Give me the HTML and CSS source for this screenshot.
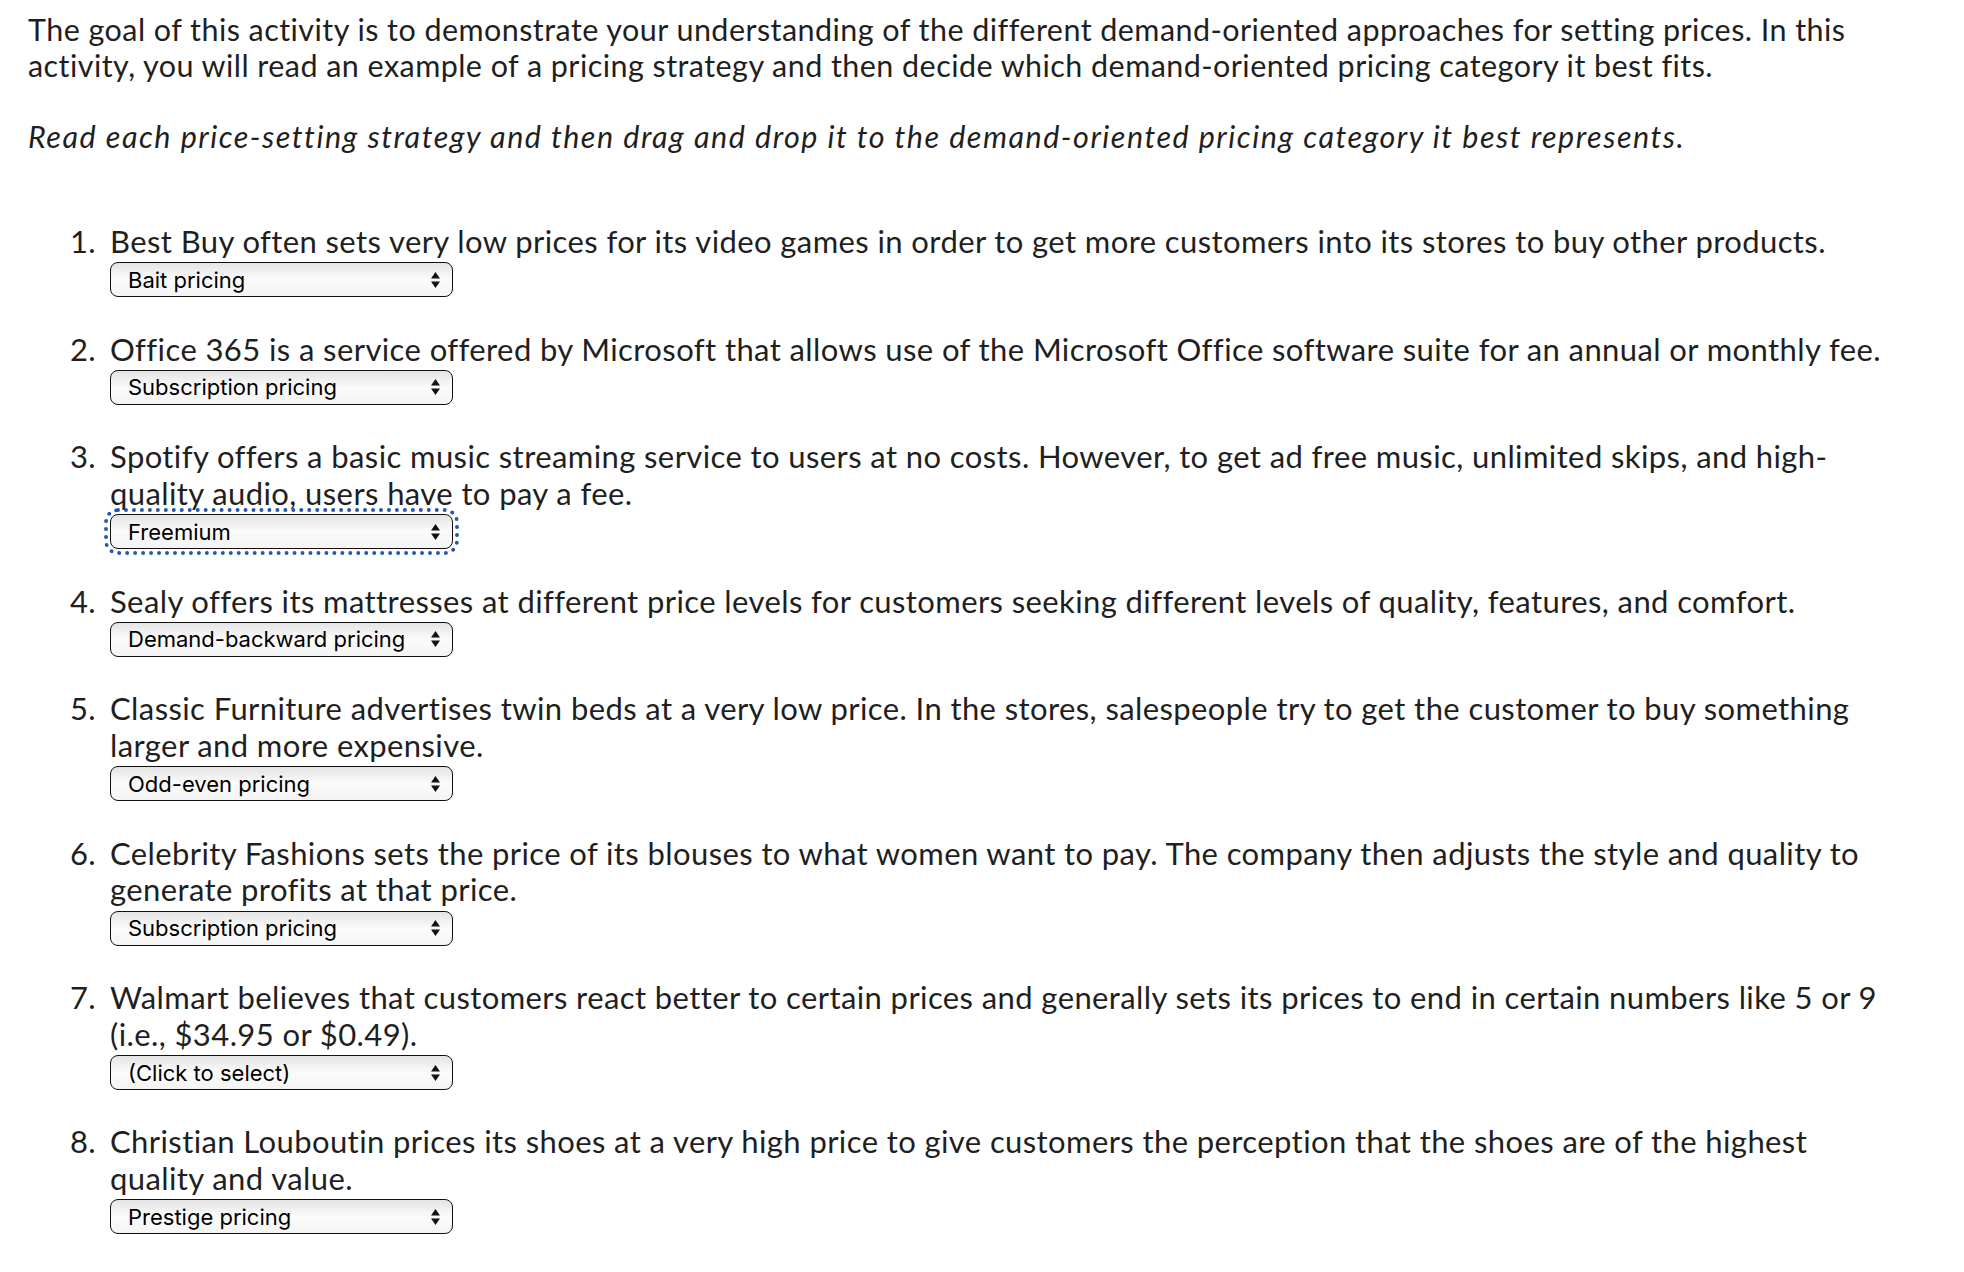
FILE: index.html
```html
<!DOCTYPE html>
<html lang="en">
<head>
  <meta charset="UTF-8">
  <meta name="viewport" content="width=device-width, initial-scale=1.0">
  <title>Demand-oriented pricing</title>
  <link rel="stylesheet" href="styles.css">
</head>
<body>
  <div class="activity">
    <p class="intro">The goal of this activity is to demonstrate your understanding of the different demand-oriented approaches for setting prices. In this activity, you will read an example of a pricing strategy and then decide which demand-oriented pricing category it best fits.</p>
    <p class="instructions">Read each price-setting strategy and then drag and drop it to the demand-oriented pricing category it best represents.</p>

    <ol class="questions">
      <li>
        <p class="q-text">Best Buy often sets very low prices for its video games in order to get more customers into its stores to buy other products.</p>
        <span class="dropdown">
          <select>
            <option>(Click to select)</option>
            <option selected>Bait pricing</option>
            <option>Subscription pricing</option>
            <option>Freemium</option>
            <option>Demand-backward pricing</option>
            <option>Odd-even pricing</option>
            <option>Prestige pricing</option>
          </select>
          <svg class="arrows" viewBox="0 0 11 18"><polygon points="5.5,1 10,7.5 1,7.5"/><polygon points="1,10.5 10,10.5 5.5,17"/></svg>
        </span>
      </li>
      <li>
        <p class="q-text">Office 365 is a service offered by Microsoft that allows use of the Microsoft Office software suite for an annual or monthly fee.</p>
        <span class="dropdown">
          <select>
            <option>(Click to select)</option>
            <option>Bait pricing</option>
            <option selected>Subscription pricing</option>
            <option>Freemium</option>
            <option>Demand-backward pricing</option>
            <option>Odd-even pricing</option>
            <option>Prestige pricing</option>
          </select>
          <svg class="arrows" viewBox="0 0 11 18"><polygon points="5.5,1 10,7.5 1,7.5"/><polygon points="1,10.5 10,10.5 5.5,17"/></svg>
        </span>
      </li>
      <li>
        <p class="q-text">Spotify offers a basic music streaming service to users at no costs. However, to get ad free music, unlimited skips, and high-quality audio, users have to pay a fee.</p>
        <span class="dropdown focused">
          <select>
            <option>(Click to select)</option>
            <option>Bait pricing</option>
            <option>Subscription pricing</option>
            <option selected>Freemium</option>
            <option>Demand-backward pricing</option>
            <option>Odd-even pricing</option>
            <option>Prestige pricing</option>
          </select>
          <svg class="arrows" viewBox="0 0 11 18"><polygon points="5.5,1 10,7.5 1,7.5"/><polygon points="1,10.5 10,10.5 5.5,17"/></svg>
        </span>
      </li>
      <li>
        <p class="q-text">Sealy offers its mattresses at different price levels for customers seeking different levels of quality, features, and comfort.</p>
        <span class="dropdown">
          <select>
            <option>(Click to select)</option>
            <option>Bait pricing</option>
            <option>Subscription pricing</option>
            <option>Freemium</option>
            <option selected>Demand-backward pricing</option>
            <option>Odd-even pricing</option>
            <option>Prestige pricing</option>
          </select>
          <svg class="arrows" viewBox="0 0 11 18"><polygon points="5.5,1 10,7.5 1,7.5"/><polygon points="1,10.5 10,10.5 5.5,17"/></svg>
        </span>
      </li>
      <li>
        <p class="q-text">Classic Furniture advertises twin beds at a very low price. In the stores, salespeople try to get the customer to buy something larger and more expensive.</p>
        <span class="dropdown">
          <select>
            <option>(Click to select)</option>
            <option>Bait pricing</option>
            <option>Subscription pricing</option>
            <option>Freemium</option>
            <option>Demand-backward pricing</option>
            <option selected>Odd-even pricing</option>
            <option>Prestige pricing</option>
          </select>
          <svg class="arrows" viewBox="0 0 11 18"><polygon points="5.5,1 10,7.5 1,7.5"/><polygon points="1,10.5 10,10.5 5.5,17"/></svg>
        </span>
      </li>
      <li>
        <p class="q-text">Celebrity Fashions sets the price of its blouses to what women want to pay. The company then adjusts the style and quality to generate profits at that price.</p>
        <span class="dropdown">
          <select>
            <option>(Click to select)</option>
            <option>Bait pricing</option>
            <option selected>Subscription pricing</option>
            <option>Freemium</option>
            <option>Demand-backward pricing</option>
            <option>Odd-even pricing</option>
            <option>Prestige pricing</option>
          </select>
          <svg class="arrows" viewBox="0 0 11 18"><polygon points="5.5,1 10,7.5 1,7.5"/><polygon points="1,10.5 10,10.5 5.5,17"/></svg>
        </span>
      </li>
      <li>
        <p class="q-text">Walmart believes that customers react better to certain prices and generally sets its prices to end in certain numbers like 5 or 9 (i.e., $34.95 or $0.49).</p>
        <span class="dropdown">
          <select>
            <option selected>(Click to select)</option>
            <option>Bait pricing</option>
            <option>Subscription pricing</option>
            <option>Freemium</option>
            <option>Demand-backward pricing</option>
            <option>Odd-even pricing</option>
            <option>Prestige pricing</option>
          </select>
          <svg class="arrows" viewBox="0 0 11 18"><polygon points="5.5,1 10,7.5 1,7.5"/><polygon points="1,10.5 10,10.5 5.5,17"/></svg>
        </span>
      </li>
      <li>
        <p class="q-text">Christian Louboutin prices its shoes at a very high price to give customers the perception that the shoes are of the highest quality and value.</p>
        <span class="dropdown">
          <select>
            <option>(Click to select)</option>
            <option>Bait pricing</option>
            <option>Subscription pricing</option>
            <option>Freemium</option>
            <option>Demand-backward pricing</option>
            <option>Odd-even pricing</option>
            <option selected>Prestige pricing</option>
          </select>
          <svg class="arrows" viewBox="0 0 11 18"><polygon points="5.5,1 10,7.5 1,7.5"/><polygon points="1,10.5 10,10.5 5.5,17"/></svg>
        </span>
      </li>
    </ol>
  </div>
</body>
</html>
```

FILE: styles.css
```css
* {margin:0; padding:0; box-sizing:border-box;}
body{
  background:#fff;
  color:#1f1f1f;
  font-family: Lato, "Liberation Sans", sans-serif;
}
.activity{
  padding: 12px 62px 0 28px;
}
.intro, .instructions{
  font-size: 30.5px;
  line-height: 35.5px;
  letter-spacing: 0.45px;
}
.instructions{
  margin-top: 35.5px;
  font-style: italic;
  letter-spacing: 1.5px;
}

/* 문제 목록 */
.questions{
  list-style: none;
  counter-reset: q;
  margin-top: 69px;
  font-size: 31px;
  line-height: 36.8px;
  letter-spacing: 0.4px;
}
.questions li{
  display: grid;
  grid-template-columns: 32px 1fr;
  column-gap: 14px;
  margin-left: 36px;
  margin-bottom: 33.3px;
  counter-increment: q;
}
.questions li::before{
  content: counter(q) ".";
  text-align: right;
  grid-row: 1 / span 2;
}
.q-text{grid-column: 2;}

/* 셀렉트 박스 */
.dropdown{
  grid-column: 2;
  position: relative;
  display: block;
  width: 343px;
  margin-top: 2.5px;
  letter-spacing: 0;
}
.dropdown select{
  appearance: none;
  -webkit-appearance: none;
  display: block;
  width: 100%;
  height: 35px;
  padding: 0 30px 0 17px;
  border: 1.6px solid #111;
  border-radius: 8px;
  background: linear-gradient(#e4e4e4, #fbfbfb 50%, #f4f4f4);
  color: #000;
  font-family: Inter, "Liberation Sans", sans-serif;
  font-size: 22px;
}
.dropdown .arrows{
  position: absolute;
  right: 12px; top: 8.5px;
  width: 11px; height: 18px;
  fill: #111;
  pointer-events: none;
}
.dropdown.focused select{
  outline: 4px dotted #2557b0;
  outline-offset: 2.5px;
}
```
